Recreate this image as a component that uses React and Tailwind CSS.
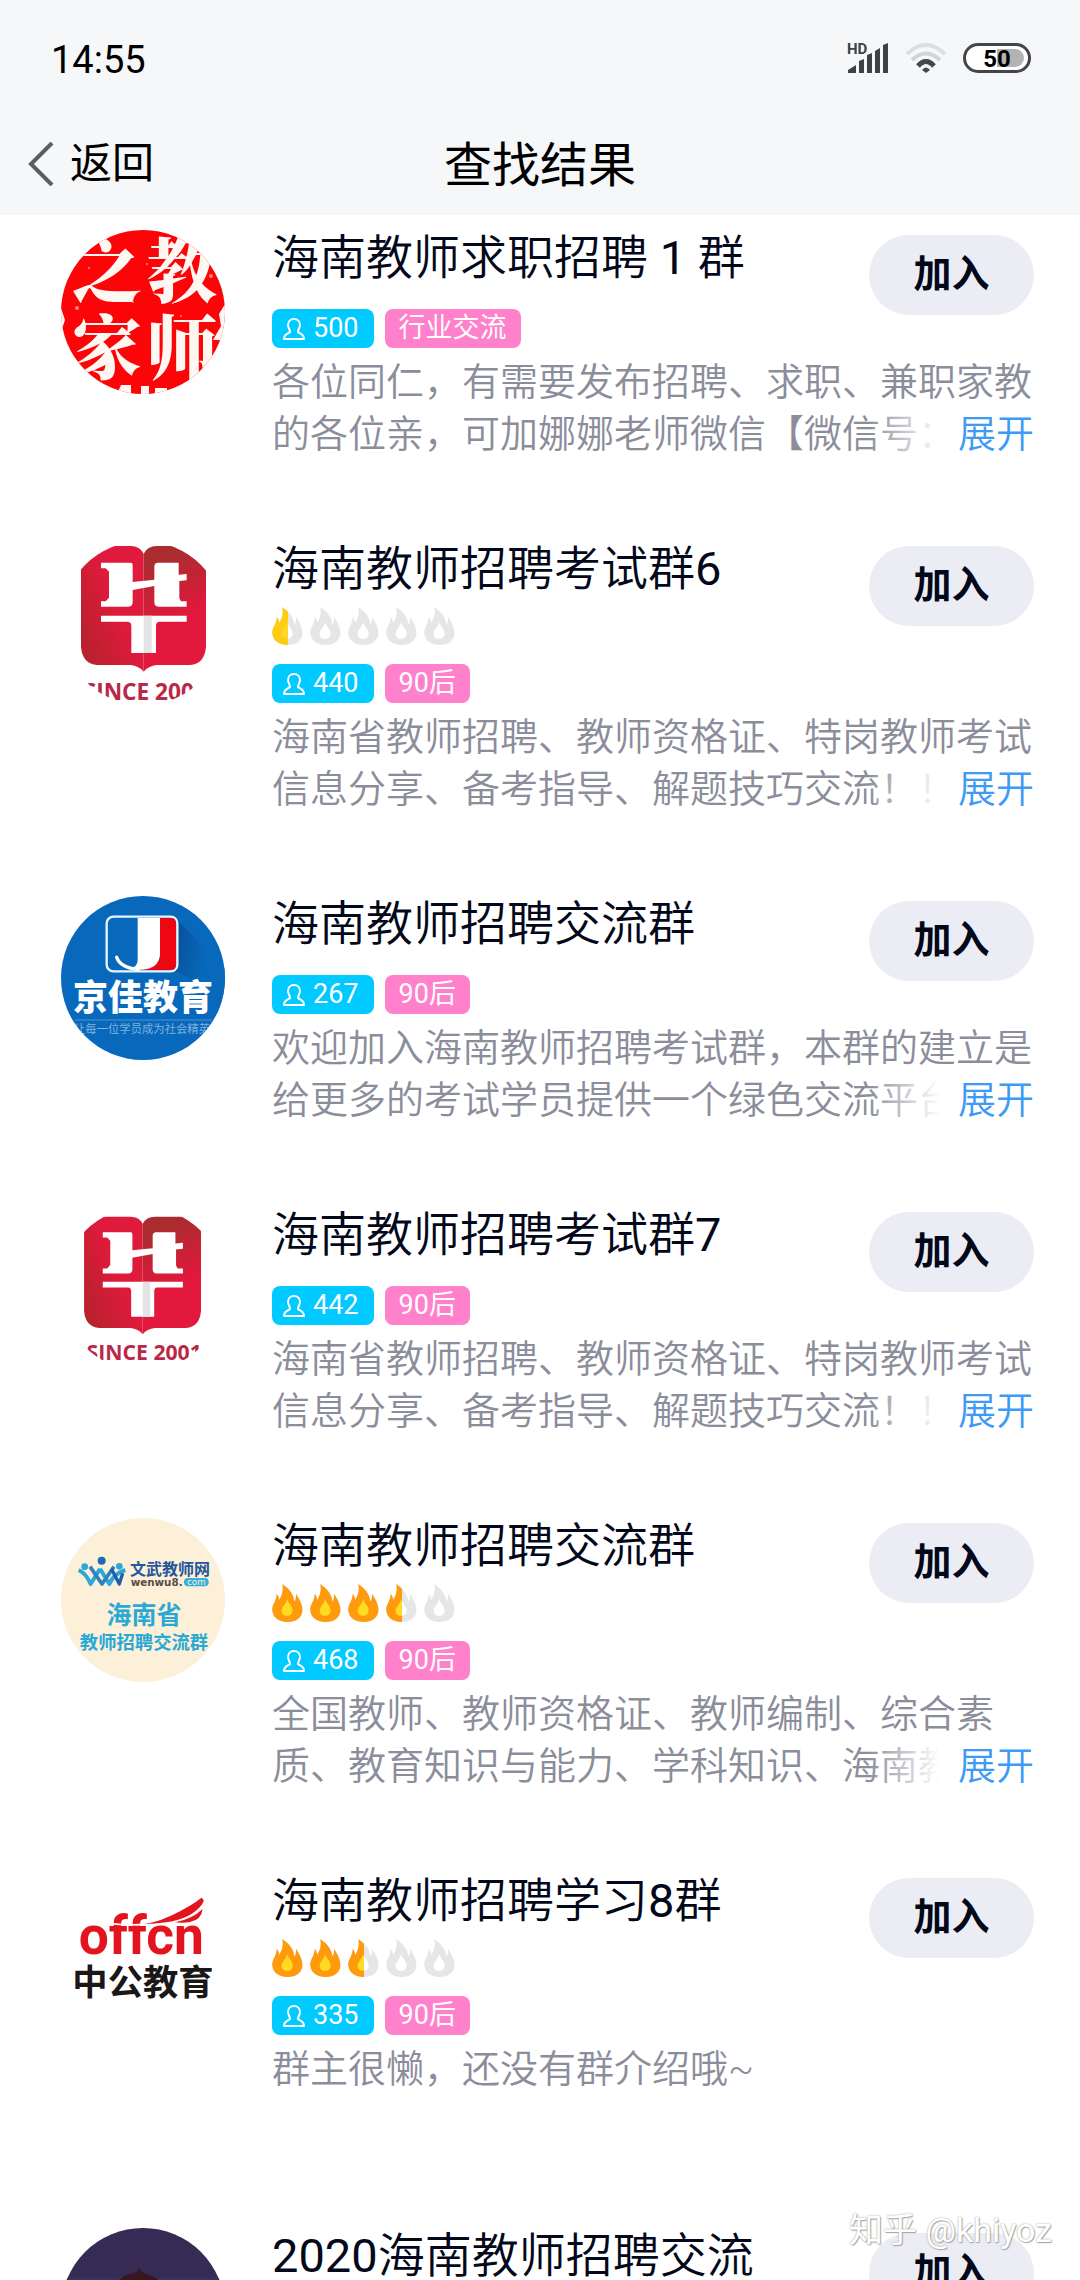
import React from 'react';

const FLAME =
  'M31 0C46 12 66 26 68 54C73 49 74 39 73 30C84 46 93 62 93 80C93 103 74 117 47 117C19 117 0 102 0 78C0 62 12 56 14 30C18 36 21 40 21 49C30 36 35 20 31 0Z';
const DROP = 'M46 46C49 60 63 68 63 81C63 92 56 98 46 98C36 98 29 92 29 82C29 70 43 62 46 46Z';

function SealAvatar() {
  return (
    <svg viewBox="0 0 164 164" className="size-[164px] rounded-full bg-[#fb0509]">
      <g className="font-['Noto_Serif_CJK_SC','Noto_Sans_CJK_SC',serif] text-[70px] font-black" fill="#fff8f2" textAnchor="middle">
        <text x="46" y="67">之</text>
        <text x="121" y="67">教</text>
        <text x="46" y="144">家</text>
        <text x="121" y="144">师</text>
      </g>
      <path d="M0 78l4 12-4 12zM164 74l-6 10 2 12-8 14h12zM60 155h10v9H56zM80 156h8v8h-8zM94 158h12v6H94z" fill="#fff8f2" />
      <g fill="#ff8b7a">
        <circle cx="28" cy="38" r="1" />
        <circle cx="16" cy="78" r="2" />
        <circle cx="72" cy="72" r="1" />
        <circle cx="86" cy="34" r="1" />
        <circle cx="150" cy="46" r="2" />
        <circle cx="120" cy="86" r="1" />
      </g>
    </svg>
  );
}

function BookAvatar({ small }) {
  const id = small ? 'book-small' : 'book';
  return (
    <svg viewBox={small ? '49 17 526 526' : '63 33 492 492'} className="size-[164px] rounded-full bg-[#fffefe]">
      <defs>
        <linearGradient id={`${id}-left`} x1="0" y1="1" x2="0.9" y2="0.3">
          <stop offset="0.1" stopColor="#b5222c" />
          <stop offset="0.7" stopColor="#e01a3c" />
        </linearGradient>
        <linearGradient id={`${id}-right`} x1="0.3" y1="0" x2="0.5" y2="1">
          <stop offset="0.1" stopColor="#ab2c2f" />
          <stop offset="0.6" stopColor="#e2183c" />
        </linearGradient>
      </defs>
      <path d="M311 71Q300 48 272 48H172Q123 50 123 98V350Q127 402 172 405H272Q297 408 311 425Z" fill={`url(#${id}-left)`} />
      <path d="M311 71Q322 48 350 48H450Q498 50 498 98V350Q494 402 450 405H350Q325 408 311 425Z" fill={`url(#${id}-right)`} />
      <path
        d="M183 98H272Q278 98 278 105V156L343 149V110Q343 98 354 98H416V134L440 132V151L418 153V205L423 214H440V230H355Q343 230 343 216V168L278 180V216Q278 230 265 230H183V214H197L207 203V125L197 115H183Z"
        fill="#fff"
      />
      <path d="M183 257H440V275H357Q348 276 348 287V369H274V287Q274 276 264 275H183Z" fill="#fff" />
      <path d="M311 257H335V369H311Z" fill="#e4e4e6" />
      <text x="316" y="509" textAnchor="middle" fill="#b92848" className="font-['Open_Sans',sans-serif] text-[68px] font-bold">
        SINCE 2001
      </text>
    </svg>
  );
}

function JingjiaAvatar() {
  return (
    <svg viewBox="63 48 492 492" className="size-[164px] rounded-full bg-[#0869bc]">
      <defs>
        <linearGradient id="long-shadow" x1="0" y1="0.3" x2="1" y2="0.7">
          <stop offset="0" stopColor="#09519a" />
          <stop offset="0.6" stopColor="#0869bc" />
        </linearGradient>
      </defs>
      <path d="M412 120L555 265V400L515 400V330L400 270Z" fill="url(#long-shadow)" />
      <rect x="200" y="110" width="212" height="164" rx="20" fill="#0869bc" stroke="#e6f6fb" strokeWidth="7" />
      <path d="M360 114H392Q408 114 408 130V254Q408 270 392 270H290Q360 262 360 225Z" fill="#ee0713" />
      <path d="M293 114H360V225Q355 267 305 269L268 266Q293 262 293 240Z" fill="#fff" />
      <path d="M230 232Q242 264 295 268" fill="none" stroke="#fff" strokeWidth="10" strokeLinecap="round" />
      <g className="font-['Noto_Sans_CJK_SC',sans-serif]" textAnchor="middle">
        <text x="309" y="389" fill="#fff" className="text-[105px] font-black">京佳教育</text>
        <text x="306" y="460" fill="#7fb2dc" className="text-[34px]">让每一位学员成为社会精英</text>
      </g>
      <path d="M105 420H515" stroke="#4a93cf" strokeWidth="3" />
    </svg>
  );
}

function WenwuAvatar() {
  return (
    <svg viewBox="63 54 492 492" className="size-[164px] rounded-full bg-[#fdf0d8]">
      <g fill="none" strokeLinejoin="round">
        <path d="M116 210Q138 220 152 252L180 206" stroke="#2ba7da" strokeWidth="12" />
        <path d="M180 206L208 252Q222 220 256 210" stroke="#2ba7da" strokeWidth="12" />
        <path d="M150 200L186 252L222 200" stroke="#2b83c6" strokeWidth="11" />
        <path d="M214 206L238 252L248 220" stroke="#1f5dab" strokeWidth="10" />
      </g>
      <circle cx="185" cy="182" r="12" fill="#1f6cb4" />
      <circle cx="134" cy="200" r="10" fill="#2ba7da" />
      <circle cx="238" cy="199" r="10" fill="#2ba7da" />
      <g className="font-['Noto_Sans_CJK_SC',sans-serif] font-bold">
        <text x="270" y="224" fill="#25579b" className="text-[48px]">文武教师网</text>
        <text x="312" y="372" textAnchor="middle" fill="#2ba9d6" className="text-[75px]">海南省</text>
        <text x="312" y="447" textAnchor="middle" fill="#2ba9d6" className="text-[55px]">教师招聘交流群</text>
      </g>
      <text x="272" y="257" fill="#5c4a48" className="font-['DejaVu_Sans',sans-serif] text-[31px] font-bold">wenwu8.</text>
      <rect x="432" y="234" width="74" height="25" rx="12" fill="#39add9" />
      <text x="469" y="255" textAnchor="middle" fill="#fdf0d8" className="font-['DejaVu_Sans',sans-serif] text-[26px]">com</text>
    </svg>
  );
}

function OffcnAvatar() {
  return (
    <svg viewBox="63 -21 492 492" className="size-[164px] rounded-full bg-white">
      <text x="304" y="222" textAnchor="middle" fill="#e3141e" className="font-['Roboto',sans-serif] text-[160px] font-bold">
        offcn
      </text>
      <path d="M195 128Q300 150 395 104Q455 75 484 51Q500 56 488 74Q455 118 380 129Q290 142 195 128Z" fill="#e3141e" stroke="#fff" strokeWidth="4" />
      <path d="M405 127Q455 118 488 87Q484 120 450 126Q430 130 405 127Z" fill="#e3141e" />
      <text x="309" y="345" textAnchor="middle" fill="#1c1717" className="font-['Noto_Sans_CJK_SC',sans-serif] text-[106px] font-bold">
        中公教育
      </text>
    </svg>
  );
}

function PortraitAvatar() {
  return (
    <svg viewBox="0 0 164 164" className="size-[164px] rounded-full bg-[#352b55]">
      <path d="M0 50H164V164H0Z" fill="#3b3159" />
      <path d="M52 70Q54 50 68 46Q76 46 78 40Q82 46 90 48Q106 52 110 80V164H52Z" fill="#38151f" />
    </svg>
  );
}

const GROUPS = [
  {
    id: 1,
    name: '海南教师求职招聘 1 群',
    members: 500,
    tag: '行业交流',
    intro: '各位同仁，有需要发布招聘、求职、兼职家教的各位亲，可加娜娜老师微信【微信号：',
    Avatar: SealAvatar,
  },
  {
    id: 2,
    name: '海南教师招聘考试群6',
    heat: 0.5,
    members: 440,
    tag: '90后',
    intro: '海南省教师招聘、教师资格证、特岗教师考试信息分享、备考指导、解题技巧交流！！更',
    Avatar: BookAvatar,
  },
  {
    id: 3,
    name: '海南教师招聘交流群',
    members: 267,
    tag: '90后',
    intro: '欢迎加入海南教师招聘考试群，本群的建立是给更多的考试学员提供一个绿色交流平台',
    Avatar: JingjiaAvatar,
  },
  {
    id: 4,
    name: '海南教师招聘考试群7',
    members: 442,
    tag: '90后',
    intro: '海南省教师招聘、教师资格证、特岗教师考试信息分享、备考指导、解题技巧交流！！',
    Avatar: () => <BookAvatar small />,
  },
  {
    id: 5,
    name: '海南教师招聘交流群',
    heat: 3.5,
    members: 468,
    tag: '90后',
    intro: '全国教师、教师资格证、教师编制、综合素质、教育知识与能力、学科知识、海南教',
    Avatar: WenwuAvatar,
  },
  {
    id: 6,
    name: '海南教师招聘学习8群',
    heat: 2.5,
    members: 335,
    tag: '90后',
    intro: '群主很懒，还没有群介绍哦~',
    short: true,
    Avatar: OffcnAvatar,
  },
  {
    id: 7,
    name: '2020海南教师招聘交流',
    members: 500,
    tag: '90后',
    intro: '',
    short: true,
    Avatar: PortraitAvatar,
  },
];

function Flame({ fill, hot }) {
  return (
    <span className="relative block h-[38px] w-[31px]">
      <svg viewBox="0 0 94 117" className="h-[38px] w-[31px]">
        <path d={FLAME} fill="#e6e6e6" />
        <path d={DROP} fill="#fff" />
      </svg>
      {fill > 0 && (
        <span className="absolute inset-y-0 left-0 overflow-hidden" style={{ width: `${fill * 100}%` }}>
          <svg viewBox="0 0 94 117" className="h-[38px] w-[31px] max-w-none">
            <path d={FLAME} fill={hot ? '#ff9a0d' : '#ffcc14'} />
            <path d={DROP} fill={hot ? '#ffdc22' : '#ffd62e'} />
          </svg>
        </span>
      )}
    </span>
  );
}

function Heat({ value }) {
  return (
    <div className="flex h-11 items-end gap-[7px]">
      {[0, 1, 2, 3, 4].map(i => (
        <Flame key={i} fill={Math.max(0, Math.min(1, value - i))} hot={value >= 1} />
      ))}
    </div>
  );
}

function StatusBar() {
  return (
    <div className="flex h-[116px] items-center justify-between pr-[49px] pl-[51px]">
      <time className="pt-1 text-[38px]">14:55</time>
      <div className="flex items-center gap-4">
        <svg viewBox="0 0 42 32" className="h-8 w-[42px]" fill="#3f4144">
          <text x="0" y="12" className="text-[15px] font-bold">HD</text>
          <path d="M1 31V28L9 23V31ZM12 31V19L17 17V31ZM20 31V13L25 11V31ZM28 31V9L33 6V31ZM36 31V3L41 1V31Z" />
        </svg>
        <svg viewBox="0 0 42 32" className="h-8 w-[42px]" fill="none" strokeWidth="4">
          <path d="M2 12Q21-6 40 12" stroke="#dcdddf" />
          <path d="M7 18Q21 5 35 18" stroke="#d2d3d5" />
          <path d="M13 24Q21 15 29 24" stroke="#45474a" strokeWidth="5" />
          <path d="M21 31L17 28Q21 23 25 28Z" fill="#45474a" />
        </svg>
        <svg viewBox="0 0 68 30" className="h-[30px] w-[68px]">
          <rect x="1.5" y="1.5" width="65" height="27" rx="13.5" fill="#fff" stroke="#434548" strokeWidth="3" />
          <path d="M34 6H52A9 9 0 0 1 52 24H34Z" fill="#b3b3b3" />
          <text x="34" y="24" textAnchor="middle" className="text-[24px] font-bold">50</text>
        </svg>
      </div>
    </div>
  );
}

function GroupItem({ group }) {
  const { Avatar, name, heat, members, tag, intro, short } = group;
  return (
    <li className="flex pt-[15px] pr-[46px] pb-[66px] pl-[61px]">
      <Avatar />
      <div className="ml-[47px] min-w-0 flex-1">
        <div className="flex h-[60px] justify-between">
          <h2 className="font-['Roboto','Noto_Sans_CJK_SC_DemiLight','Noto_Sans_CJK_SC',sans-serif] text-[47px] leading-[56px] font-normal whitespace-pre text-[#03081a]">
            {name}
          </h2>
          <button className="mt-[5px] h-20 w-[165px] shrink-0 rounded-full bg-[#ecedf4] pb-0.5 text-[38px] font-bold text-[#03081a]">
            加入
          </button>
        </div>
        {heat !== undefined && <Heat value={heat} />}
        <div className="mt-[19px] flex h-[39px] gap-[11px] text-[27px] leading-[39px] text-white">
          <span className="flex items-center gap-2 rounded-lg bg-[#00caff] pr-[15px] pl-[11px]">
            <svg viewBox="0 0 22 22" className="size-[22px]" fill="none" stroke="#fff" strokeWidth="2">
              <path d="M11 1C7 1 5 4 5 7C5 10 7 11 7 14C5 16 1 16 1 21H21C21 16 17 16 15 14C15 11 17 10 17 7C17 4 15 1 11 1Z" strokeLinejoin="round" />
            </svg>
            {members}
          </span>
          <span className="rounded-lg bg-[#ff80cb] px-[14px]">{tag}</span>
        </div>
        <div className="relative mt-2 h-[104px] overflow-hidden text-[38px] leading-[52px] font-[350]">
          <p className="text-[#8b8d9b]">{intro}</p>
          {!short && (
            <div className="absolute right-0 bottom-0 flex">
              <span className="w-[90px] bg-linear-to-r from-white/0 to-white to-80%" />
              <button className="bg-white text-[#3f9af5]">展开</button>
            </div>
          )}
        </div>
      </div>
    </li>
  );
}

export default function App() {
  return (
    <div className="relative h-screen overflow-hidden bg-white font-['Roboto','Noto_Sans_CJK_SC',sans-serif] text-black">
      <header className="bg-[#f6f7f9]">
        <StatusBar />
        <div className="grid h-[99px] grid-cols-3 items-center px-7">
          <a href="#" className="flex items-center gap-4 pb-1 text-[42px]">
            <svg viewBox="0 0 26 44" className="h-11 w-[26px]" fill="none" stroke="#5b5d63" strokeWidth="4">
              <path d="M24 1L3 22L24 43" />
            </svg>
            返回
          </a>
          <h1 className="text-center text-[48px]">查找结果</h1>
        </div>
      </header>

      <ul>
        {GROUPS.map(group => (
          <GroupItem key={group.id} group={group} />
        ))}
      </ul>

      <p className="absolute right-7 bottom-6 text-[34px] text-white [text-shadow:0_0_2px_#999,1px_1px_1px_#aaa]">
        知乎 @khiyoz
      </p>
    </div>
  );
}
